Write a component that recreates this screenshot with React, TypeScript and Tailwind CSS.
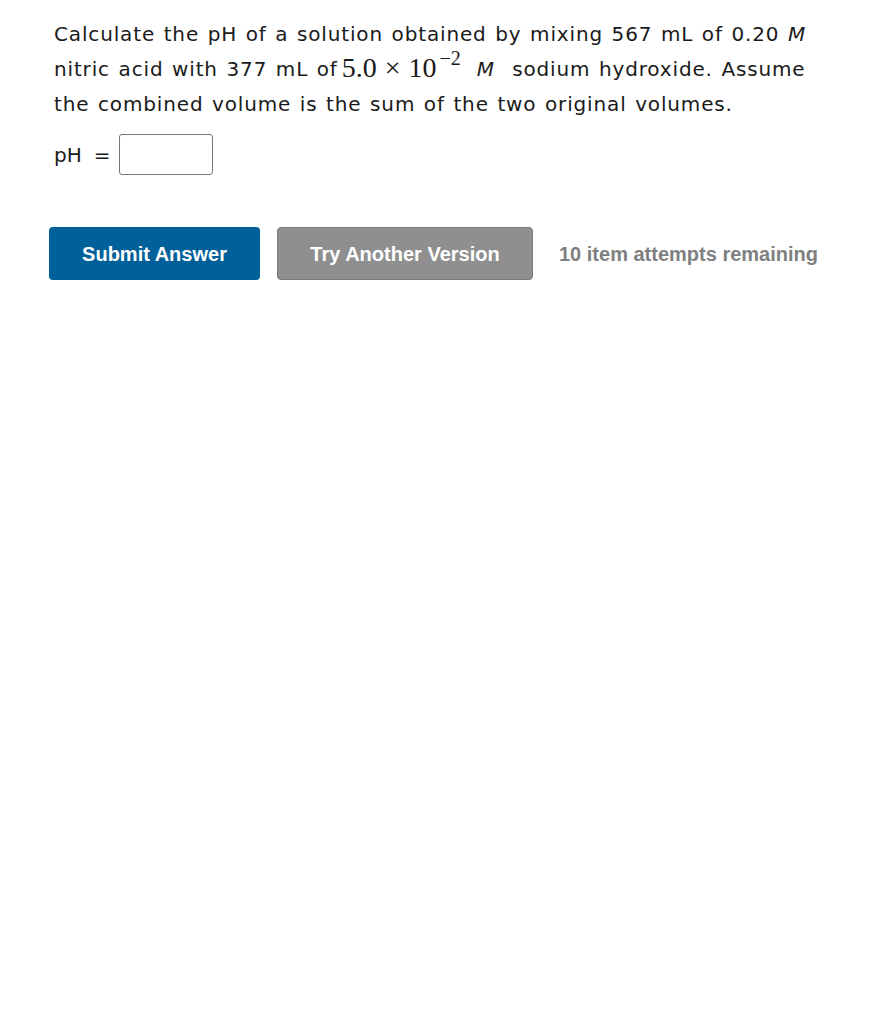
export default function App() {
  return (
    <div className="min-h-[1024px] bg-white px-[54px] pt-[17px] text-[#1a1a1a]">
      <p className="whitespace-nowrap font-['DejaVu_Sans',sans-serif] text-[20px] leading-[35px] tracking-[0.85px] [word-spacing:1.4px]">
        Calculate the pH of a solution obtained by mixing 567 mL of 0.20 <i>M</i>
        <br />
        nitric acid with 377 mL of
        <span className="relative top-[1px] ml-[4px] inline-block font-['Liberation_Serif',serif] text-[28px] leading-[20px] tracking-normal">
          <span>5.0</span>
          <span className="mx-[8px]">×</span>
          <span>10</span>
          <span className="relative -top-[12px] ml-[3px] inline-block text-[20px]">−2</span>
        </span>
        <i className="ml-[16px]">M</i>&nbsp; sodium hydroxide. Assume
        <br />
        the combined volume is the sum of the two original volumes.
      </p>
      <div className="mt-[12px] flex items-center font-['DejaVu_Sans',sans-serif] text-[20px]">
        <span>pH</span>
        <span className="ml-[12px]">=</span>
        <input
          type="text"
          className="ml-[8px] h-[41px] w-[94px] rounded-[3px] border border-[#777] bg-white"
        />
      </div>
      <div className="-ml-[5px] mt-[52px] flex items-center font-['Liberation_Sans',sans-serif] text-[20px] font-bold">
        <button className="h-[53px] w-[211px] rounded-[4px] bg-[#00609a] text-white">Submit Answer</button>
        <button className="ml-[17px] h-[53px] w-[256px] rounded-[4px] border border-[#7a7a7a] bg-[#8f8f8f] text-white">
          Try Another Version
        </button>
        <span className="ml-[26px] text-[#808080]">10 item attempts remaining</span>
      </div>
    </div>
  )
}
